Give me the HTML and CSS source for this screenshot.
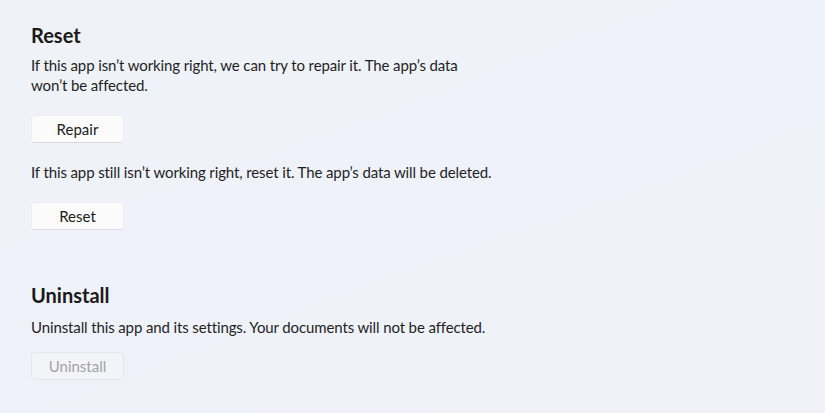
FILE: index.html
```html
<!DOCTYPE html>
<html lang="en">
<head>
<meta charset="utf-8">
<title>App settings</title>
<link rel="stylesheet" href="styles.css">
</head>
<body>
<main class="page">
  <section class="group group-reset">
    <h2 class="title">Reset</h2>
    <p class="desc desc-wrap">If this app isn’t working right, we can try to repair it. The app’s data won’t be affected.</p>
    <button class="btn" type="button">Repair</button>
    <p class="desc desc-second">If this app still isn’t working right, reset it. The app’s data will be deleted.</p>
    <button class="btn" type="button">Reset</button>
  </section>
  <section class="group group-uninstall">
    <h2 class="title">Uninstall</h2>
    <p class="desc">Uninstall this app and its settings. Your documents will not be affected.</p>
    <button class="btn btn-disabled" type="button" disabled>Uninstall</button>
  </section>
</main>
</body>
</html>
```

FILE: styles.css
```css
html, body {
  margin: 0;
  padding: 0;
}
body {
  width: 825px;
  height: 413px;
  overflow: hidden;
  background: linear-gradient(160deg, #eff2f7 0%, #eff2fa 50%, #f1f2f7 100%);
  font-family: "Lato", "Open Sans", sans-serif;
  color: #1b1b1b;
}
.page {
  padding: 21px 0 0 31px;
  display: flex;
  flex-direction: column;
}
.group {
  display: flex;
  flex-direction: column;
  align-items: flex-start;
}
.group-uninstall {
  margin-top: 51px;
}
.title {
  margin: 0;
  font-size: 20px;
  line-height: 28px;
  font-weight: 700;
  color: #1a1a1a;
}
.desc {
  margin: 6px 0 0 0;
  font-size: 15px;
  line-height: 20px;
  letter-spacing: -0.12px;
  color: #1f1f1f;
}
.desc-wrap {
  width: 450px;
}
.desc-second {
  margin-top: 19px;
}
.group-uninstall .desc {
  margin-top: 8px;
}
.btn {
  margin-top: 20px;
  width: 93px;
  height: 28px;
  padding: 0;
  font-family: inherit;
  font-size: 15px;
  color: #1b1b1b;
  background: #fbfbfc;
  border: 1px solid #eceef2;
  border-bottom-color: #d9dbe0;
  border-radius: 4px;
}
.group-uninstall .btn {
  margin-top: 15px;
}
.btn-disabled {
  background: #f3f4f8;
  color: #a2a3a7;
  border-color: #e4e6ea;
}
```
